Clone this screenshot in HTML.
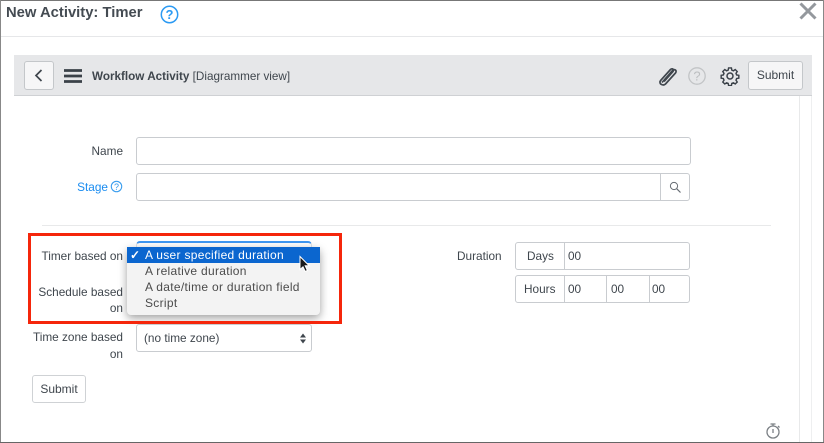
<!DOCTYPE html>
<html>
<head>
<meta charset="utf-8">
<style>
html,body{margin:0;padding:0;background:#fff}
#p{position:relative;width:824px;height:443px;overflow:hidden;background:#fff;font-family:"Liberation Sans",sans-serif;font-size:11.8px;color:#3f464d;filter:blur(.35px)}
#p div,#p svg{position:absolute;box-sizing:border-box}
.t{white-space:nowrap;line-height:16px}
.r{text-align:right}
.box{border:1px solid #c9ccd0;border-radius:3px;background:#fff}
.v{top:0;width:1px;background:#c9ccd0}
.btn{border:1px solid #cfd2d5;border-radius:3px;background:#fff;text-align:center;color:#3f464d}
</style>
</head>
<body>
<div id="p">
<!-- window edges -->
<div style="left:0;top:0;width:824px;height:1px;background:#777"></div>
<div style="left:0;top:0;width:1px;height:443px;background:#888"></div>
<div style="left:823px;top:0;width:1px;height:443px;background:#888"></div>
<div style="left:0;top:442px;width:824px;height:1px;background:#666"></div>

<!-- header -->
<div class="t" style="left:6px;top:5px;font-size:14.8px;font-weight:bold;color:#444b52">New Activity: Timer</div>
<svg style="left:160px;top:5px" width="19" height="19" viewBox="0 0 19 19"><circle cx="9.5" cy="9.5" r="8.2" fill="none" stroke="#2b9af3" stroke-width="1.5"/><text x="9.5" y="14" text-anchor="middle" font-family="Liberation Sans" font-weight="bold" font-size="13" fill="#2b9af3">?</text></svg>
<svg style="left:798px;top:1px" width="20" height="20" viewBox="0 0 20 20"><path d="M2.5 2.5L17.5 17.5M17.5 2.5L2.5 17.5" stroke="#94989d" stroke-width="3" fill="none"/></svg>
<div style="left:1px;top:36px;width:822px;height:1px;background:#e6e7e9"></div>

<!-- right scroll lines -->
<div style="left:799px;top:95px;width:1px;height:347px;background:#e8e9ea"></div>
<div style="left:811px;top:95px;width:1px;height:347px;background:#eeeff0"></div>

<!-- toolbar -->
<div style="left:14px;top:55px;width:798px;height:41px;background:#e6e7e9;border-bottom:1px solid #cfd1d4"></div>
<div class="btn" style="left:24px;top:61px;width:30px;height:29px;background:#f6f6f7;border-color:#c4c7ca"></div>
<svg style="left:34px;top:69px" width="10" height="13" viewBox="0 0 10 13"><path d="M7.5 1L2 6.5L7.5 12" stroke="#3f464d" stroke-width="1.7" fill="none"/></svg>
<svg style="left:64px;top:69px" width="18" height="14" viewBox="0 0 18 14"><path d="M0 1.5h18M0 7h18M0 12.5h18" stroke="#3a4148" stroke-width="2.8"/></svg>
<div class="t" style="left:92px;top:68.5px;font-size:11.7px;color:#3f464d"><b>Workflow Activity</b> [Diagrammer view]</div>
<svg style="left:657px;top:65px" width="22" height="22" viewBox="0 0 22 22"><path d="M5 17.5L15.5 5.5C17 3.8 19.5 4.8 19 7L18.5 8L8.5 19C6.5 21 2.5 19.5 3 16.5L4 15L13.5 4.5C14.5 3.5 16 3.5 16.5 5L16 6.5L7 16.5" fill="none" stroke="#3f464d" stroke-width="1.7"/></svg>
<svg style="left:687px;top:66px" width="20" height="20" viewBox="0 0 20 20"><circle cx="10" cy="10" r="8.2" fill="none" stroke="#c2c4c6" stroke-width="1.3"/><text x="10" y="14.5" text-anchor="middle" font-family="Liberation Sans" font-size="13" fill="#bcbec0">?</text></svg>
<svg style="left:720px;top:66px" width="20" height="20" viewBox="0 0 20 20"><path d="M8.5 1.5h3l.4 2.3 1.7.7 1.9-1.3 2.1 2.1-1.3 1.9.7 1.7 2.3.4v3l-2.3.4-.7 1.7 1.3 1.9-2.1 2.1-1.9-1.3-1.7.7-.4 2.3h-3l-.4-2.3-1.7-.7-1.9 1.3-2.1-2.1 1.3-1.9-.7-1.7-2.3-.4v-3l2.3-.4.7-1.7-1.3-1.9 2.1-2.1 1.9 1.3 1.7-.7z" transform="translate(.5 .5) scale(.95)" fill="none" stroke="#3a4148" stroke-width="1.5"/><circle cx="10" cy="10" r="3" fill="none" stroke="#3a4148" stroke-width="1.5"/></svg>
<div class="btn t" style="left:748px;top:61px;width:55px;height:29px;line-height:27px;background:#f6f6f7;border-color:#c4c7ca;font-size:12px">Submit</div>

<!-- Name / stage -->
<div class="t r" style="left:40px;width:83px;top:143px">Name</div>
<div class="box" style="left:136px;top:137px;width:555px;height:28px"></div>
<div class="t r" style="left:40px;width:68px;top:179px;color:#1a8cf0">Stage</div>
<svg style="left:110px;top:180px" width="13" height="13" viewBox="0 0 13 13"><circle cx="6.5" cy="6.5" r="5.2" fill="none" stroke="#3b9eee" stroke-width="1.1"/><text x="6.5" y="9.8" text-anchor="middle" font-family="Liberation Sans" font-size="9" fill="#2f97ec">?</text></svg>
<div class="box" style="left:136px;top:173px;width:554px;height:28px"><div class="v" style="left:523px;height:26px"></div></div>
<svg style="left:669px;top:181px" width="13" height="13" viewBox="0 0 13 13"><circle cx="5" cy="5" r="3.6" fill="none" stroke="#666c73" stroke-width="1"/><path d="M7.8 7.8L11.5 11.5" stroke="#666c73" stroke-width="1.2"/></svg>

<div style="left:42px;top:225px;width:729px;height:1px;background:#e8e9ea"></div>

<!-- underlying select focus edge -->
<div style="left:136px;top:241px;width:176px;height:10px;border:1px solid #dfe3e8;border-top:2px solid #3f97f2;border-radius:4px;background:#fff"></div>

<!-- labels -->
<div class="t r" style="left:30px;width:93px;top:248px">Timer based on</div>
<div class="t r" style="left:30px;width:93px;top:284px">Schedule based</div>
<div class="t r" style="left:30px;width:93px;top:300px">on</div>
<div class="t r" style="left:30px;width:93px;top:329px">Time zone based</div>
<div class="t r" style="left:30px;width:93px;top:346px">on</div>

<!-- popup menu -->
<div style="left:127px;top:247px;width:193px;height:68px;background:#f3f3f3;border-radius:4px;box-shadow:0 3px 9px rgba(0,0,0,.38)"></div>
<div style="left:127px;top:247px;width:193px;height:16px;background:#0b66cf"></div>
<div class="t" style="left:130px;top:247px;color:#fff;font-size:12px;font-weight:bold">✓</div>
<div class="t" style="left:145px;top:247px;color:#fff;font-size:12px;letter-spacing:.3px">A user specified duration</div>
<div class="t" style="left:145px;top:263px;color:#4b4b4b;font-size:12px;letter-spacing:.3px">A relative duration</div>
<div class="t" style="left:145px;top:279px;color:#4b4b4b;font-size:12px;letter-spacing:.3px">A date/time or duration field</div>
<div class="t" style="left:145px;top:295px;color:#4b4b4b;font-size:12px;letter-spacing:.3px">Script</div>
<svg style="left:298px;top:255px" width="14" height="19" viewBox="0 0 14 19"><path d="M2 1.5V14.5L5 11.8L7.2 16.5L9.4 15.5L7.2 10.8H11.2Z" fill="#1a1a1a" stroke="#fff" stroke-width="1"/></svg>

<!-- red highlight -->
<div style="left:28px;top:233px;width:314px;height:91px;border:3px solid #f5260b"></div>

<!-- time zone select -->
<div class="box" style="left:136px;top:324px;width:176px;height:28px"></div>
<div class="t" style="left:144px;top:330px">(no time zone)</div>
<svg style="left:299px;top:333px" width="8" height="11" viewBox="0 0 8 11"><path d="M4 0.5L7 4.5H1ZM4 10.5L1 6.5H7Z" fill="#3f464d"/></svg>

<div class="btn t" style="left:32px;top:375px;width:54px;height:28px;line-height:26px;font-size:12px">Submit</div>

<!-- duration -->
<div class="t" style="left:457px;top:248px">Duration</div>
<div class="box" style="left:515px;top:242px;width:175px;height:28px"><div class="v" style="left:48px;height:26px"></div></div>
<div class="t" style="left:527px;top:248px">Days</div>
<div class="t" style="left:568px;top:248px">00</div>
<div class="box" style="left:515px;top:275px;width:175px;height:28px"><div class="v" style="left:48px;height:26px"></div><div class="v" style="left:90px;height:26px"></div><div class="v" style="left:133px;height:26px"></div></div>
<div class="t" style="left:524px;top:281px">Hours</div>
<div class="t" style="left:568px;top:281px">00</div>
<div class="t" style="left:611px;top:281px">00</div>
<div class="t" style="left:652px;top:281px">00</div>

<!-- timer icon -->
<svg style="left:765px;top:422px" width="17" height="18" viewBox="0 0 17 18"><circle cx="8" cy="10" r="6" fill="none" stroke="#7b8085" stroke-width="1.3"/><path d="M5.5 2h5M8 2v2M8 7v4M13 4l1.5 1.5" stroke="#7b8085" stroke-width="1.3" fill="none"/></svg>
</div>
</body>
</html>
